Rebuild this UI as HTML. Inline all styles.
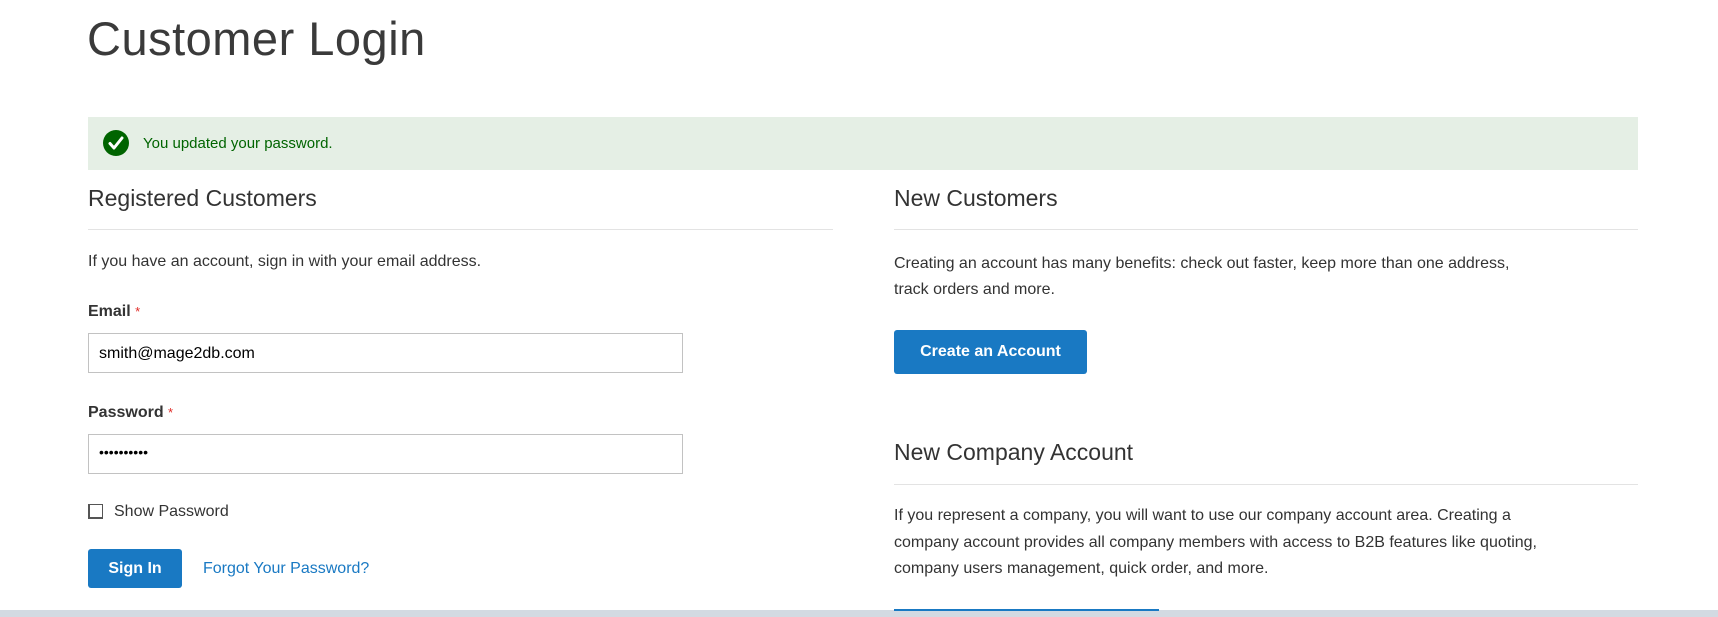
<!DOCTYPE html>
<html><head><meta charset="utf-8"><style>
body{margin:0;width:1718px;height:617px;overflow:hidden;background:#fff;font-family:"Liberation Sans",sans-serif;color:#333;position:relative}
.a{position:absolute;white-space:nowrap}
h1{position:absolute;left:87px;top:11px;margin:0;font-weight:normal;font-size:47px;color:#3a3a3a;letter-spacing:0.5px}
.msg{position:absolute;left:88px;top:117px;width:1550px;height:53px;background:#e5efe5}
.t{font-size:16px;line-height:26px}
.h{font-size:23px;font-weight:300;color:#333}
.line{position:absolute;height:1px;background:#e3e3e3}
.inp{position:absolute;left:88px;width:593px;height:38px;border:1px solid #c2c2c2;background:#fff}
.btn{position:absolute;background:#1979c3;color:#fff;font-weight:bold;font-size:16px;border-radius:3px;text-align:center}
</style></head><body>
<h1>Customer Login</h1>
<div class="msg"></div>
<svg class="a" style="left:102px;top:129px" width="28" height="28" viewBox="0 0 28 28"><circle cx="14" cy="14" r="13" fill="#006400"/><path d="M8 14.5l4 4.5 8-10" stroke="#fff" stroke-width="3" fill="none" stroke-linecap="round" stroke-linejoin="round"/></svg>
<div class="a" style="left:143px;top:135px;font-size:15px;color:#006400">You updated your password.</div>

<div class="a h" style="left:88px;top:185px">Registered Customers</div>
<div class="line" style="left:88px;top:229px;width:745px"></div>
<div class="a t" style="left:88px;top:249px">If you have an account, sign in with your email address.</div>
<div class="a t" style="left:88px;top:299px;font-weight:bold">Email <span style="color:#e02b27;font-weight:normal;font-size:13px">*</span></div>
<div class="inp" style="top:333px"></div>
<div class="a t" style="left:99px;top:341px;color:#000">smith@mage2db.com</div>
<div class="a t" style="left:88px;top:400px;font-weight:bold">Password <span style="color:#e02b27;font-weight:normal;font-size:13px">*</span></div>
<div class="inp" style="top:434px"></div>
<div class="a" style="left:99px;top:444px;font-size:14px;color:#000;letter-spacing:0px">••••••••••</div>
<div class="a" style="left:88px;top:504px;width:12px;height:12px;border:1px solid #555;border-width:1px 1px 2px 2px"></div>
<div class="a t" style="left:114px;top:499px">Show Password</div>
<div class="btn" style="left:88px;top:549px;width:94px;height:39px;line-height:39px">Sign In</div>
<div class="a t" style="left:203px;top:556px;color:#1979c3">Forgot Your Password?</div>

<div class="a h" style="left:894px;top:185px">New Customers</div>
<div class="line" style="left:894px;top:229px;width:744px"></div>
<div class="a t" style="left:894px;top:251px;line-height:26px">Creating an account has many benefits: check out faster, keep more than one address,<br>track orders and more.</div>
<div class="btn" style="left:894px;top:330px;width:193px;height:44px;line-height:44px">Create an Account</div>
<div class="a h" style="left:894px;top:439px">New Company Account</div>
<div class="line" style="left:894px;top:484px;width:744px"></div>
<div class="a t" style="left:894px;top:503px;line-height:26.5px">If you represent a company, you will want to use our company account area. Creating a<br>company account provides all company members with access to B2B features like quoting,<br>company users management, quick order, and more.</div>
<div class="a" style="left:0;top:610px;width:1718px;height:7px;background:#d3dae2"></div>
<div class="a" style="left:894px;top:609px;width:265px;height:2px;background:#1979c3"></div>
</body></html>
